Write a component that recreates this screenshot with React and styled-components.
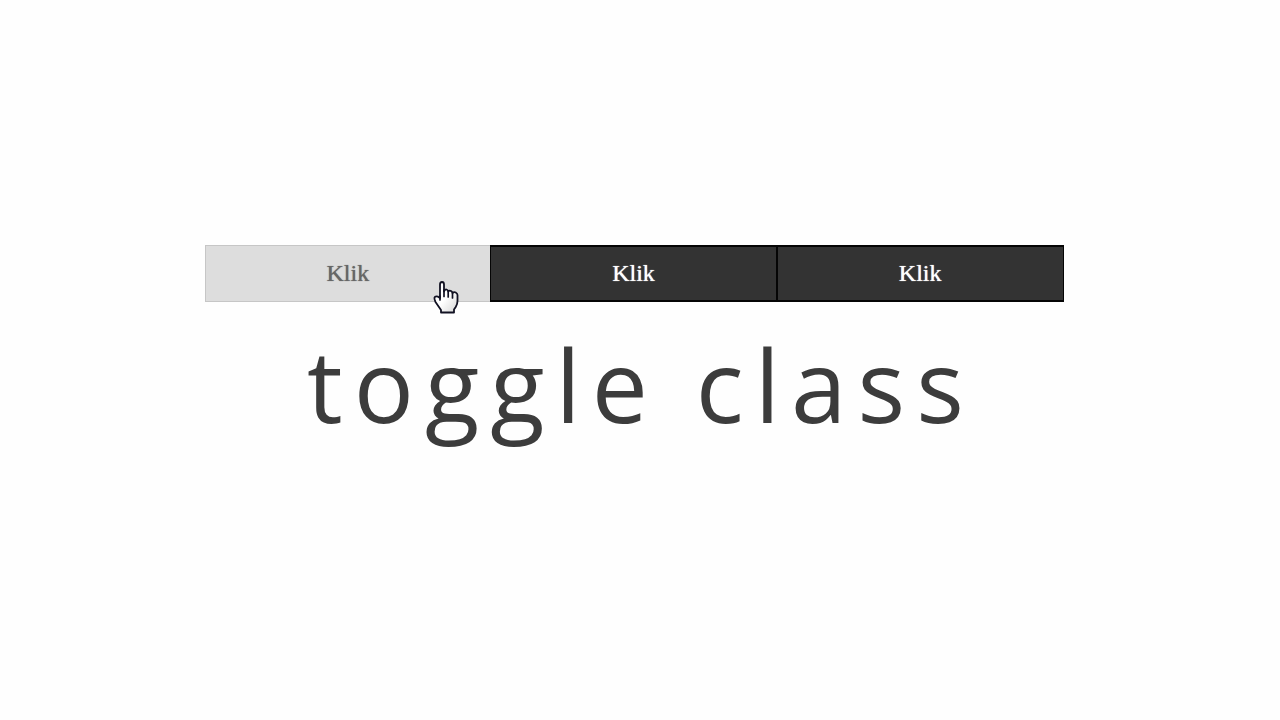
import React, { useState } from 'react';
import styled, { createGlobalStyle } from 'styled-components';

const tabs = ['Klik', 'Klik', 'Klik'];

function App() {
    const [active, setActive] = useState(0);

    return (
        <Page>
            <GlobalStyle />
            <TabBar>
                {tabs.map((label, i) => (
                    <TabButton
                        key={i}
                        type="button"
                        aria-pressed={active === i}
                        $active={active === i}
                        onClick={() => setActive(i)}
                    >
                        {label}
                    </TabButton>
                ))}
                <HandCursor viewBox="0 0 26 33" aria-hidden="true">
                    <defs>
                        <linearGradient id="hand" x1="0" y1="0" x2="1" y2="1">
                            <stop offset="0.5" stopColor="#ffffff" />
                            <stop offset="1" stopColor="#d4d4d4" />
                        </linearGradient>
                    </defs>
                    <path
                        d="M7 17V3.5Q7 1 9 1T11 3.5V10.500Q12 8 13.500 8.500T15.200 10.500Q16.500 9 18 10T19.500 12Q21 10.500 22.700 11.500T24.500 14V20Q24.500 23 22.700 26L21 28.500V31.500H8V29L2.500 21Q1 18 1.500 16.500T5 15.700Z"
                        fill="url(#hand)"
                        stroke="#111122"
                        strokeWidth="1.8"
                        strokeLinejoin="round"
                    />
                    <path
                        d="M11 9V15.500M15.200 10.500V16M19.500 12V17M7 15V19"
                        fill="none"
                        stroke="#111122"
                        strokeWidth="1.7"
                        strokeLinecap="round"
                    />
                </HandCursor>
            </TabBar>
            <Title>toggle class</Title>
        </Page>
    );
}

export default App;

const GlobalStyle = createGlobalStyle`
    body {
        margin: 0;
        background-color: #fefefe;
    }
    * {
        box-sizing: border-box;
    }
    `;

const Page = styled.main`
    display: flex;
    flex-direction: column;
    align-items: center;
    justify-content: center;
    min-height: 100vh;
    padding: 0 12px 24px 0;
    `;

const TabBar = styled.div`
    position: relative;
    display: flex;
    width: 90%;
    max-width: 859px;
    `;

const TabButton = styled.button`
    flex: 1;
    height: 57px;
    padding: 0;
    border: 1px solid ${({ $active }) => ($active ? '#c6c6c6' : '#050505')};
    border-width: ${({ $active }) => ($active ? '1px 0 1px 1px' : '2px 1px')};
    background-color: ${({ $active }) => ($active ? '#dddddd' : '#333333')};
    color: ${({ $active }) => ($active ? '#666666' : '#ffffff')};
    font-family: 'Liberation Serif', 'Times New Roman', serif;
    font-size: 24px;
    line-height: 28px;
    text-shadow: 0 0 1px currentColor;
    cursor: pointer;
    `;

const HandCursor = styled.svg`
    position: absolute;
    top: 36px;
    left: 228px;
    width: 26px;
    height: 33px;
    pointer-events: none;
    `;

/* left padding balances the tracking after the last letter */
const Title = styled.h1`
    margin: 14px 0 0;
    padding-left: 14px;
    color: #3c3c3c;
    font-family: 'Open Sans', sans-serif;
    font-size: 100px;
    font-weight: 400;
    line-height: 136px;
    letter-spacing: 11px;
    `;
